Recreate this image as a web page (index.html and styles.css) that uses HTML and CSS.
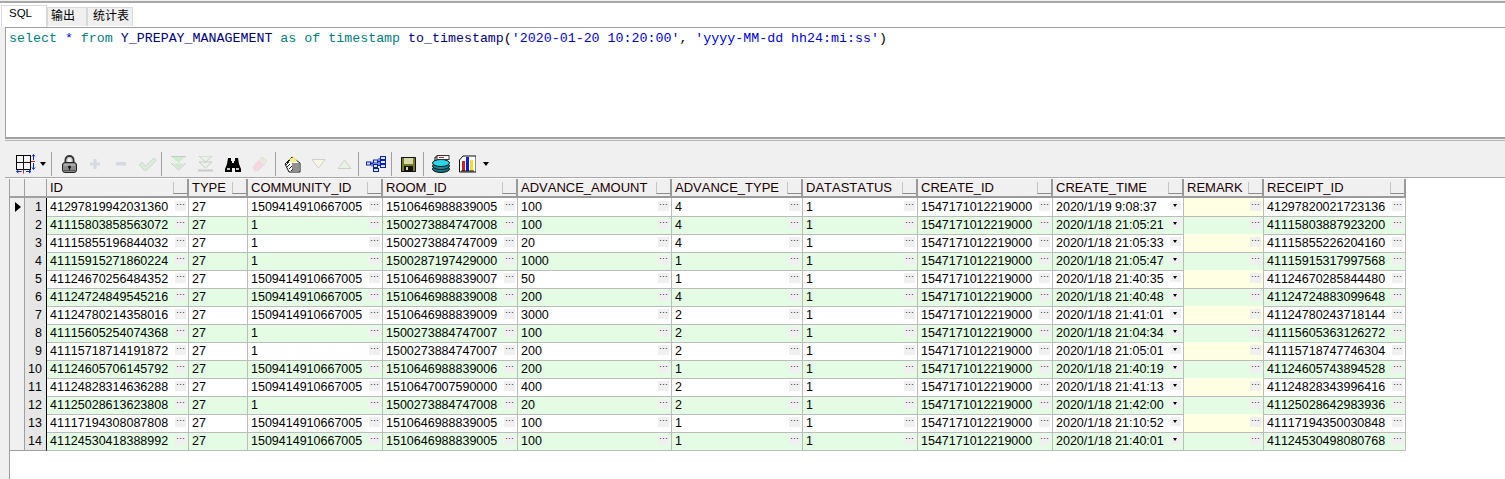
FILE: index.html
```html
<!DOCTYPE html>
<html lang="zh">
<head>
<meta charset="utf-8">
<title>SQL</title>
<link rel="stylesheet" href="styles.css">
</head>
<body>
<div class="tabs">
  <div class="tab active">SQL</div>
  <div class="tab t2">输出</div>
  <div class="tab t3">统计表</div>
</div>
<div class="editor"><span class="k">select</span> <span class="s">*</span> <span class="k">from</span> <span class="n">Y_PREPAY_MANAGEMENT</span> <span class="k">as</span> <span class="k">of</span> <span class="k">timestamp</span> <span class="n">to_timestamp</span>(<span class="s">'2020-01-20 10:20:00'</span>, <span class="s">'yyyy-MM-dd hh24:mi:ss'</span>)</div>
<div class="split"></div>
<div class="toolbar">
  <svg class="i-grid" width="20" height="20" viewBox="0 0 20 20"><g fill="none"><rect x="0.5" y="1.500" width="14" height="14" stroke="#000" fill="#f4f4f4"/><path d="M7.500 2v13M1 8.500h13" stroke="#111"/><path d="M15 7.500h4" stroke="#e02020"/><path d="M7.500 15.500v4" stroke="#e02020"/><path d="M17.500 1v5M17.500 9v6M16 2.500l1.500-2 1.500 2M16 13.500l1.500 2 1.500-2M0.500 17.500h5M10 17.500h5M2.500 16l-2 1.500 2 1.500M13 16l2 1.500-2 1.500" stroke="#0a2fc4"/></g></svg>
  <span class="caret c1"></span>
  <span class="sep s1"></span>
  <span class="btn"><svg width="15" height="18" viewBox="0 0 15 18"><path d="M3.500 8V5a4 4 0 0 1 8 0v3" fill="none" stroke="#333" stroke-width="2"/><path d="M5 8V5a2.500 2.500 0 0 1 5 0v3" fill="none" stroke="#bbb"/><rect x=".5" y="7.500" width="14" height="10" rx="2.500" fill="#8a8a8a" stroke="#222"/><path d="M2 10h11" stroke="#ccc"/><path d="M2 15.500h11" stroke="#555"/><circle cx="7.500" cy="12" r="1.500" fill="#111"/><path d="M7 12h1v3H7z" fill="#111"/></svg></span>
  <span class="btn"><svg width="12" height="12" viewBox="0 0 12 12"><path d="M4.500 1h3v3.500H11v3H7.500V11h-3V7.500H1v-3h3.500z" fill="#d5d9e4"/></svg></span>
  <span class="btn"><svg width="12" height="4" viewBox="0 0 12 4"><path d="M1 0h10v3.500H1z" fill="#d5d9e4"/></svg></span>
  <span class="btn"><svg width="19" height="15" viewBox="0 0 19 15"><path d="M1 8l3-3 3.500 4L16 1l2.500 2.500L7.500 14z" fill="#dcecdc" stroke="#ccd8cc"/></svg></span>
  <span class="sep"></span>
  <span class="btn b27"><svg width="15" height="16" viewBox="0 0 15 16"><path d="M0 .5h15" stroke="#c8c8c8"/><path d="M1 1h13L7.500 7z" fill="#cdeccd"/><path d="M0 7l7.500 7L15 7" fill="none" stroke="#c8c8c8"/><path d="M2 7.500h11L7.500 13z" fill="#cdeccd"/></svg></span>
  <span class="btn b27"><svg width="15" height="16" viewBox="0 0 15 16"><path d="M1 0l6.500 6L14 0zM1 6l6.500 6L14 6z" fill="#e8f4e8" stroke="#c6cec6"/><path d="M0 14.500h15" stroke="#cacaca" stroke-width="2"/></svg></span>
  <span class="btn b27"><svg width="16" height="15" viewBox="0 0 16 15"><path d="M3 1h3v3h1v2h2V4h1V1h3l1 6 2 5v3h-6v-4H7v4H0v-3l2-5z" fill="#000"/><path d="M2 12h3M11 12h3" stroke="#fff" stroke-width="1.500"/></svg></span>
  <span class="btn b28"><svg width="16" height="16" viewBox="0 0 16 16"><path d="M10 1l5 4-8 9-4 1-2-4z" fill="#ececec" stroke="#dcdcdc"/><path d="M1 11l6-7 5 4-5 6-3 1z" fill="#f6d6e0"/><path d="M10 3l3 2.500" stroke="#dcefcc" stroke-width="2"/></svg></span>
  <span class="sep s3"></span>
  <span class="btn"><svg width="17" height="17" viewBox="0 0 17 17"><path d="M1 8l7-7 8 6v9H5z" fill="#fff" stroke="#111"/><path d="M5 3l5-2 3 4-5 2z" fill="#f4f080"/><path d="M3 7l3-3M2 9l3-3M3 11l3-3M5 13l3-3M7 15l2-2M8 8h7M8 10h7M8 12h7M8 14h7" stroke="#222"/></svg></span>
  <span class="btn"><svg width="15" height="10" viewBox="0 0 15 10"><path d="M1 .5h13L7.500 9z" fill="#f7f7e4" stroke="#cfcfcf"/></svg></span>
  <span class="btn"><svg width="15" height="10" viewBox="0 0 15 10"><path d="M1 9.500h13L7.500 1z" fill="#eaf2e0" stroke="#cfcfcf"/></svg></span>
  <span class="sep s4"></span>
  <span class="btn"><svg width="20" height="16" viewBox="0 0 20 16"><path d="M4 7.500h3M6 5.500v5M12 5.500h3M12 9.500h3M13 2v8" stroke="#0a20b0" fill="none"/><g fill="#dfe6ff" stroke="#0a20b0"><rect x=".5" y="6" width="4" height="3"/><rect x="7.500" y="4" width="4" height="3"/><rect x="7.500" y="8.500" width="4" height="3"/><rect x="14.500" y=".5" width="5" height="3"/><rect x="14.500" y="4.500" width="5" height="3"/><rect x="14.500" y="8.500" width="5" height="3"/><rect x="7.500" y="12.500" width="5" height="3"/></g></svg></span>
  <span class="sep s5"></span>
  <span class="btn"><svg width="15" height="15" viewBox="0 0 15 15"><path d="M0 0h14l1 1v14H0z" fill="#7a7a20"/><path d="M.5.500h14v14H.5z" fill="none" stroke="#111"/><rect x="3" y="1" width="9" height="6" fill="#d8d8a8"/><rect x="3" y="9" width="9" height="5" fill="#111"/><rect x="5" y="10" width="2" height="3" fill="#d8d8a8"/></svg></span>
  <span class="sep s6"></span>
  <span class="btn"><svg width="18" height="18" viewBox="0 0 18 18"><ellipse cx="9" cy="14" rx="8.500" ry="3.500" fill="#087a8a" stroke="#111"/><ellipse cx="9" cy="11" rx="8.500" ry="3.500" fill="#0a8a9a" stroke="#111"/><ellipse cx="9" cy="8" rx="8.500" ry="3.500" fill="#28d8e8" stroke="#111"/><rect x="5" y="0.500" width="12" height="4" fill="#fff" stroke="#333"/><rect x="7" y="2" width="5" height="1" fill="#e02020"/><path d="M3 6V2h2" fill="none" stroke="#111"/></svg></span>
  <span class="btn"><svg width="17" height="18" viewBox="0 0 17 18"><path d="M.5 5L4 1l13 0v16H.5z" fill="#fff" stroke="#111"/><rect x="3" y="6" width="3" height="10" fill="#d02020"/><rect x="7" y="2" width="3" height="14" fill="#1020d0"/><rect x="11" y="5" width="3" height="11" fill="#f0e020"/><path d="M2 16h13" stroke="#111"/></svg></span>
  <span class="caret c2"></span>
</div>
<div class="gridarea">
  <div class="grid">
    <div class="row head"><div class="ind"></div><div class="num"></div>
      <div class="h">ID<i></i></div><div class="h">TYPE<i></i></div><div class="h">COMMUNITY_ID<i></i></div><div class="h">ROOM_ID<i></i></div><div class="h">ADVANCE_AMOUNT<i></i></div><div class="h">ADVANCE_TYPE<i></i></div><div class="h">DATASTATUS<i></i></div><div class="h">CREATE_ID<i></i></div><div class="h">CREATE_TIME<i></i></div><div class="h">REMARK<i></i></div><div class="h">RECEIPT_ID<i></i></div>
    </div>
    <div class="row"><div class="ind"><span class="cur"></span></div><div class="num">1</div><div class="c">41297819942031360<b>···</b></div><div class="c">27</div><div class="c">1509414910667005<b>···</b></div><div class="c">1510646988839005<b>···</b></div><div class="c">100<b>···</b></div><div class="c">4<b>···</b></div><div class="c">1<b>···</b></div><div class="c">1547171012219000<b>···</b></div><div class="c">2020/1/19 9:08:37<u></u></div><div class="c null"><b>···</b></div><div class="c">41297820021723136<b>···</b></div></div>
    <div class="row alt"><div class="ind"></div><div class="num">2</div><div class="c">41115803858563072<b>···</b></div><div class="c">27</div><div class="c">1<b>···</b></div><div class="c">1500273884747008<b>···</b></div><div class="c">100<b>···</b></div><div class="c">4<b>···</b></div><div class="c">1<b>···</b></div><div class="c">1547171012219000<b>···</b></div><div class="c">2020/1/18 21:05:21<u></u></div><div class="c null"><b>···</b></div><div class="c">41115803887923200<b>···</b></div></div>
    <div class="row"><div class="ind"></div><div class="num">3</div><div class="c">41115855196844032<b>···</b></div><div class="c">27</div><div class="c">1<b>···</b></div><div class="c">1500273884747009<b>···</b></div><div class="c">20<b>···</b></div><div class="c">4<b>···</b></div><div class="c">1<b>···</b></div><div class="c">1547171012219000<b>···</b></div><div class="c">2020/1/18 21:05:33<u></u></div><div class="c null"><b>···</b></div><div class="c">41115855226204160<b>···</b></div></div>
    <div class="row alt"><div class="ind"></div><div class="num">4</div><div class="c">41115915271860224<b>···</b></div><div class="c">27</div><div class="c">1<b>···</b></div><div class="c">1500287197429000<b>···</b></div><div class="c">1000<b>···</b></div><div class="c">1<b>···</b></div><div class="c">1<b>···</b></div><div class="c">1547171012219000<b>···</b></div><div class="c">2020/1/18 21:05:47<u></u></div><div class="c null"><b>···</b></div><div class="c">41115915317997568<b>···</b></div></div>
    <div class="row"><div class="ind"></div><div class="num">5</div><div class="c">41124670256484352<b>···</b></div><div class="c">27</div><div class="c">1509414910667005<b>···</b></div><div class="c">1510646988839007<b>···</b></div><div class="c">50<b>···</b></div><div class="c">1<b>···</b></div><div class="c">1<b>···</b></div><div class="c">1547171012219000<b>···</b></div><div class="c">2020/1/18 21:40:35<u></u></div><div class="c null"><b>···</b></div><div class="c">41124670285844480<b>···</b></div></div>
    <div class="row alt"><div class="ind"></div><div class="num">6</div><div class="c">41124724849545216<b>···</b></div><div class="c">27</div><div class="c">1509414910667005<b>···</b></div><div class="c">1510646988839008<b>···</b></div><div class="c">200<b>···</b></div><div class="c">4<b>···</b></div><div class="c">1<b>···</b></div><div class="c">1547171012219000<b>···</b></div><div class="c">2020/1/18 21:40:48<u></u></div><div class="c null"><b>···</b></div><div class="c">41124724883099648<b>···</b></div></div>
    <div class="row"><div class="ind"></div><div class="num">7</div><div class="c">41124780214358016<b>···</b></div><div class="c">27</div><div class="c">1509414910667005<b>···</b></div><div class="c">1510646988839009<b>···</b></div><div class="c">3000<b>···</b></div><div class="c">2<b>···</b></div><div class="c">1<b>···</b></div><div class="c">1547171012219000<b>···</b></div><div class="c">2020/1/18 21:41:01<u></u></div><div class="c null"><b>···</b></div><div class="c">41124780243718144<b>···</b></div></div>
    <div class="row alt"><div class="ind"></div><div class="num">8</div><div class="c">41115605254074368<b>···</b></div><div class="c">27</div><div class="c">1<b>···</b></div><div class="c">1500273884747007<b>···</b></div><div class="c">100<b>···</b></div><div class="c">2<b>···</b></div><div class="c">1<b>···</b></div><div class="c">1547171012219000<b>···</b></div><div class="c">2020/1/18 21:04:34<u></u></div><div class="c null"><b>···</b></div><div class="c">41115605363126272<b>···</b></div></div>
    <div class="row"><div class="ind"></div><div class="num">9</div><div class="c">41115718714191872<b>···</b></div><div class="c">27</div><div class="c">1<b>···</b></div><div class="c">1500273884747007<b>···</b></div><div class="c">200<b>···</b></div><div class="c">2<b>···</b></div><div class="c">1<b>···</b></div><div class="c">1547171012219000<b>···</b></div><div class="c">2020/1/18 21:05:01<u></u></div><div class="c null"><b>···</b></div><div class="c">41115718747746304<b>···</b></div></div>
    <div class="row alt"><div class="ind"></div><div class="num">10</div><div class="c">41124605706145792<b>···</b></div><div class="c">27</div><div class="c">1509414910667005<b>···</b></div><div class="c">1510646988839006<b>···</b></div><div class="c">200<b>···</b></div><div class="c">1<b>···</b></div><div class="c">1<b>···</b></div><div class="c">1547171012219000<b>···</b></div><div class="c">2020/1/18 21:40:19<u></u></div><div class="c null"><b>···</b></div><div class="c">41124605743894528<b>···</b></div></div>
    <div class="row"><div class="ind"></div><div class="num">11</div><div class="c">41124828314636288<b>···</b></div><div class="c">27</div><div class="c">1509414910667005<b>···</b></div><div class="c">1510647007590000<b>···</b></div><div class="c">400<b>···</b></div><div class="c">2<b>···</b></div><div class="c">1<b>···</b></div><div class="c">1547171012219000<b>···</b></div><div class="c">2020/1/18 21:41:13<u></u></div><div class="c null"><b>···</b></div><div class="c">41124828343996416<b>···</b></div></div>
    <div class="row alt"><div class="ind"></div><div class="num">12</div><div class="c">41125028613623808<b>···</b></div><div class="c">27</div><div class="c">1<b>···</b></div><div class="c">1500273884747008<b>···</b></div><div class="c">20<b>···</b></div><div class="c">2<b>···</b></div><div class="c">1<b>···</b></div><div class="c">1547171012219000<b>···</b></div><div class="c">2020/1/18 21:42:00<u></u></div><div class="c null"><b>···</b></div><div class="c">41125028642983936<b>···</b></div></div>
    <div class="row"><div class="ind"></div><div class="num">13</div><div class="c">41117194308087808<b>···</b></div><div class="c">27</div><div class="c">1509414910667005<b>···</b></div><div class="c">1510646988839005<b>···</b></div><div class="c">100<b>···</b></div><div class="c">1<b>···</b></div><div class="c">1<b>···</b></div><div class="c">1547171012219000<b>···</b></div><div class="c">2020/1/18 21:10:52<u></u></div><div class="c null"><b>···</b></div><div class="c">41117194350030848<b>···</b></div></div>
    <div class="row alt"><div class="ind"></div><div class="num">14</div><div class="c">41124530418388992<b>···</b></div><div class="c">27</div><div class="c">1509414910667005<b>···</b></div><div class="c">1510646988839005<b>···</b></div><div class="c">100<b>···</b></div><div class="c">1<b>···</b></div><div class="c">1<b>···</b></div><div class="c">1547171012219000<b>···</b></div><div class="c">2020/1/18 21:40:01<u></u></div><div class="c null"><b>···</b></div><div class="c">41124530498080768<b>···</b></div></div>
  </div>
</div>
</body>
</html>
```
FILE: styles.css
```css
* { box-sizing: border-box; }
html, body { margin: 0; height: 479px; overflow: hidden; }
body {
  background: #f0f0f0;
  font-family: "Liberation Sans", "Noto Sans CJK SC", sans-serif;
  font-size: 12.5px;
  font-kerning: none;
  color: #000;
  display: flex;
  flex-direction: column;
}
.tabs {
  height: 26px;
  margin-top: 1px;
  border-top: 2px solid #a8a8a8;
  background: #fff;
  display: flex;
  align-items: flex-end;
  padding-left: 1px;
  flex: none;
}
.tab {
  height: 19px;
  background: #f0f0f0;
  border: 1px solid #d9d9d9;
  border-bottom: 0;
  font-size: 12px;
  line-height: 17px;
  margin-bottom: 1px;
}
.tab.active {
  width: 46px;
  height: 22px;
  background: #fff;
  line-height: 15px;
  margin-bottom: 0;
  padding-left: 7px;
  font-size: 11.5px;
}
.t2 { width: 40px; padding-left: 3px; }
.t3 { width: 46px; padding-left: 5px; }
.editor {
  flex: none;
  height: 112px;
  margin-left: 5px;
  border: 1px solid #a0a0a0;
  border-width: 1px 0 2px 1px;
  background: #fff;
  padding: 4px 3px;
  font-family: "Liberation Mono", monospace;
  font-size: 13.3px;
  line-height: 14px;
  white-space: pre;
}
.k { color: #008080; }
.n { color: #000080; }
.s { color: #0000e0; }
.split {
  flex: none;
  height: 1px;
  margin: 1px 0 2px 5px;
  background: #b4b4b4;
}
.toolbar {
  flex: none;
  height: 35px;
  margin-left: 5px;
  padding: 8px 0 0 11px;
  background: #f0f0f0;
  display: flex;
  align-items: center;
  border-bottom: 1px solid #a8a8a8;
}
.i-grid { flex: none; }
.caret {
  flex: none;
  width: 0;
  height: 0;
  border: 3.5px solid transparent;
  border-top: 4px solid #000;
  border-bottom: 0;
}
.c1 { margin-left: 4px; }
.c2 { margin-left: 3px; }
.sep {
  flex: none;
  width: 1px;
  height: 24px;
  background: #a0a0a0;
  margin: 0 3px 0 1px;
}
.s1 { margin: 0 4px 0 5px; }
.s3 { margin: 0 3px 0 1px; }
.s4 { margin: 0 4px 0 1px; }
.s5 { margin: 0 3px 0 2px; }
.s6 { margin: 0 4px 0 2px; }
.btn {
  flex: none;
  width: 26px;
  height: 26px;
  display: flex;
  align-items: center;
  justify-content: center;
}
.b27 { width: 27px; }
.b28 { width: 28px; }
.gridarea {
  flex: 1;
  margin-left: 9px;
  padding-top: 1px;
  background: #fff;
}
.grid {
  width: 1397px;
  height: 100%;
  border-left: 1px solid #a0a0a0;
  background: #fff;
}
.row {
  display: grid;
  grid-template-columns: 15px 22px 142px 59px 135px 135px 154px 131px 115px 135px 131px 80px 142px;
  height: 18px;
  background: #fff;
  line-height: 18px;
}
.row.head { height: 19px; background: #f0f0f0; }
.row.alt { background: #e3fce3; }
.ind {
  background: #f0f0f0;
  border-right: 1px solid #a0a0a0;
  border-bottom: 1px solid #a0a0a0;
  display: flex;
  align-items: center;
  padding-left: 5px;
}
.cur {
  width: 0;
  height: 0;
  border: 5px solid transparent;
  border-left: 6px solid #000;
  border-right: 0;
}
.num {
  background: #e6e6e6;
  border-right: 1px solid #000;
  border-bottom: 1px solid #a0a0a0;
  text-align: right;
  padding-right: 4px;
}
.head .ind, .head .num {
  background: #f0f0f0;
  border-right-color: #a0a0a0;
  border-bottom: 2px solid #a0a0a0;
}
.h {
  background: #f0f0f0;
  border-right: 2px solid #9a9a9a;
  border-bottom: 2px solid #9a9a9a;
  padding-left: 3px;
  position: relative;
  white-space: nowrap;
  overflow: hidden;
  font-size: 13px;
  color: #1a0000;
}
.h i {
  position: absolute;
  right: 0;
  top: 3px;
  width: 14px;
  height: 12px;
  border-left: 1px solid #c4c4c4;
  border-bottom: 1px solid #8a8a8a;
}
.c {
  border-right: 1px solid #bcbcbc;
  border-bottom: 1px solid #bcbcbc;
  padding-left: 3px;
  position: relative;
  white-space: nowrap;
  overflow: hidden;
}
.c.null { background: #ffffe4; }
.alt .c.null { background: transparent; }
.c b {
  position: absolute;
  right: 2px;
  top: 3px;
  width: 11px;
  height: 10px;
  background: #f0f0f0;
  color: #222;
  font-weight: 400;
  font-size: 9px;
  line-height: 7px;
  text-align: center;
}
.c u {
  position: absolute;
  right: 2px;
  top: 3px;
  width: 11px;
  height: 9px;
  background: #f0f0f0;
}
.c u::after {
  content: "";
  position: absolute;
  left: 3px;
  top: 3px;
  border: 2.5px solid transparent;
  border-top: 3px solid #000;
  border-bottom: 0;
}
```
